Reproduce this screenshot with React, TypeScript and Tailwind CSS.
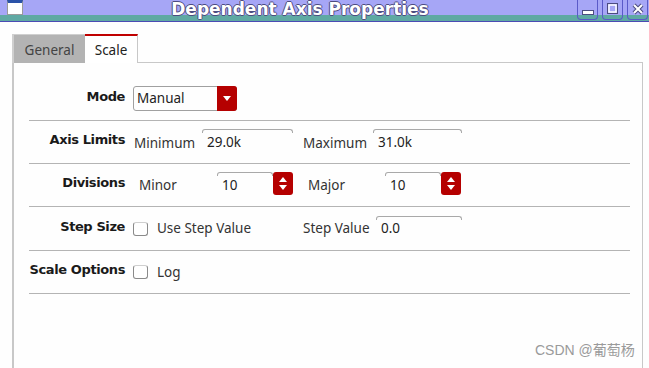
import React from 'react';

// small red spin buttons used by the division fields
const Spinner = () => (
  <div className="w-[20px] h-[23px] rounded-[3px] bg-[#b50000] flex flex-col items-center justify-between py-[5px]">
    <svg width="8" height="5" viewBox="0 0 8 5"><path d="M4 0 L8 5 L0 5 Z" fill="#fff" /></svg>
    <svg width="8" height="5" viewBox="0 0 8 5"><path d="M0 0 L8 0 L4 5 Z" fill="#fff" /></svg>
  </div>
);

const Field = ({ value, w }: { value: string; w: string }) => (
  <div className={`relative ${w} h-[26px] flex items-center pl-[5px] text-[#222]`}>
    <div className="absolute top-0 left-0 right-0 h-[4px] border-t border-x border-[#a9a9a9] rounded-t-[3px]" />
    {value}
  </div>
);

const Check = () => (
  <div className="w-[15px] h-[14px] border border-[#8a8a8a] border-t-[#cfcfcf] rounded-[3px] bg-white" />
);

const Row = ({ label, h, children }: { label: string; h: string; children: React.ReactNode }) => (
  <div className={`flex items-center border-b border-[#b4b4b4] ${h}`}>
    <div className="w-[96px] shrink-0 mb-[4px] flex justify-end whitespace-nowrap font-['DejaVu_Sans',sans-serif] font-bold text-[13px] text-[#1a1a1a] tracking-[-0.4px]">
      {label}
    </div>
    <div className="ml-[8px] flex items-center">{children}</div>
  </div>
);

const TitleBar = () => (
  <div className="h-[22px] flex items-start bg-[linear-gradient(to_bottom,#a6a6f6_0px,#a6a6f6_15px,#5fa9a3_15px,#5fa9a3_21px,#4b4bb4_21px)]">
    <div className="ml-[7px] w-[16px] h-[15px] bg-white border border-[#9a9a9a] border-t-[3px] border-t-[#2a52a8]" />
    <div className="flex-1 text-center leading-[18px] font-['DejaVu_Sans',sans-serif] font-bold text-[17px] text-white [text-shadow:-1px_0_#4c4c80,1px_0_#4c4c80,0_-1px_#4c4c80,0_1px_#4c4c80]">
      Dependent Axis Properties
    </div>
    <div className="flex gap-[4px] mr-[1px]">
      <div className="w-[21px] h-[20px] border border-[#5a5ac8] border-t-0 rounded-b-[4px] flex items-end justify-center pb-[4px]">
        <svg width="12" height="5" viewBox="0 0 12 5"><rect x="0.5" y="0.5" width="11" height="4" fill="#fff" stroke="#4c4c80" /></svg>
      </div>
      <div className="w-[21px] h-[20px] border border-[#5a5ac8] border-t-0 rounded-b-[4px] flex items-start justify-center pt-[3px]">
        <svg width="11" height="11" viewBox="0 0 11 11"><rect x="0.5" y="0.5" width="10" height="10" fill="none" stroke="#4c4c80" /><rect x="2" y="2" width="7" height="7" fill="none" stroke="#fff" strokeWidth="1.5" /></svg>
      </div>
      <div className="w-[21px] h-[20px] border border-[#5a5ac8] border-t-0 rounded-b-[4px] flex items-start justify-center pt-[3px]">
        <svg width="12" height="12" viewBox="0 0 12 12">
          <path d="M2 2 L10 10 M10 2 L2 10" stroke="#4c4c80" strokeWidth="4" />
          <path d="M2 2 L10 10 M10 2 L2 10" stroke="#fff" strokeWidth="2" />
        </svg>
      </div>
    </div>
  </div>
);

export default function App() {
  return (
    <div className="w-[649px] h-[368px] bg-[#fefefe] relative overflow-hidden font-['Noto_Sans',sans-serif] text-[13.5px] text-[#333]">
      <TitleBar />

      {/* Tabs */}
      <div className="mt-[12px] ml-[12px] w-[631px] flex h-[29px]">
        <div className="w-[73px] bg-[#b3b3b3] border-t border-l-2 border-[#cfcfcf] flex items-center justify-center pt-[2px] text-[#444]">
          General
        </div>
        <div className="w-[53px] bg-white border-t-2 border-t-[#c00000] border-r border-r-[#c8c8c8] flex items-center justify-center pt-[1px] text-[#222]">
          Scale
        </div>
        <div className="flex-1 border-b border-[#c8c8c8]" />
      </div>

      {/* Scale pane */}
      <div className="ml-[12px] w-[631px] h-[305px] border-l-2 border-r border-[#c8c8c8] pl-[15px] pr-[12px]">
        <Row label="Mode" h="h-[58px] pt-[14px]">
          <div className="w-[104px] h-[25px] border border-[#a0a0a0] rounded-[3px] flex items-center">
            <div className="flex-1 pl-[3px] text-[#222]">Manual</div>
            <div className="w-[20px] h-[25px] -mr-px bg-[#b50000] rounded-r-[3px] flex items-center justify-center">
              <svg width="8" height="5" viewBox="0 0 8 5"><path d="M0 0 L8 0 L4 5 Z" fill="#fff" /></svg>
            </div>
          </div>
        </Row>

        <Row label="Axis Limits" h="h-[43px]">
          <div className="w-[69px] pl-[1px] pt-[2px]">Minimum</div>
          <Field value="29.0k" w="w-[91px]" />
          <div className="w-[70px] ml-[10px] pt-[2px]">Maximum</div>
          <Field value="31.0k" w="w-[89px]" />
        </Row>

        <Row label="Divisions" h="h-[43px]">
          <div className="w-[84px] pl-[6px]">Minor</div>
          <div className="flex items-start">
            <Field value="10" w="w-[56px]" />
            <Spinner />
          </div>
          <div className="w-[77px] ml-[15px]">Major</div>
          <div className="flex items-start">
            <Field value="10" w="w-[56px]" />
            <Spinner />
          </div>
        </Row>

        <Row label="Step Size" h="h-[44px]">
          <Check />
          <div className="w-[146px] ml-[9px]">Use Step Value</div>
          <div className="w-[73px]">Step Value</div>
          <Field value="0.0" w="w-[86px]" />
        </Row>

        <Row label="Scale Options" h="h-[43px]">
          <Check />
          <div className="ml-[9px]">Log</div>
        </Row>
      </div>

      <div className="absolute left-[535px] top-[340px] font-['Liberation_Sans','Noto_Sans_CJK_SC',sans-serif] text-[14px] text-[#9a9a9a]">
        CSDN @葡萄杨
      </div>
    </div>
  );
}
